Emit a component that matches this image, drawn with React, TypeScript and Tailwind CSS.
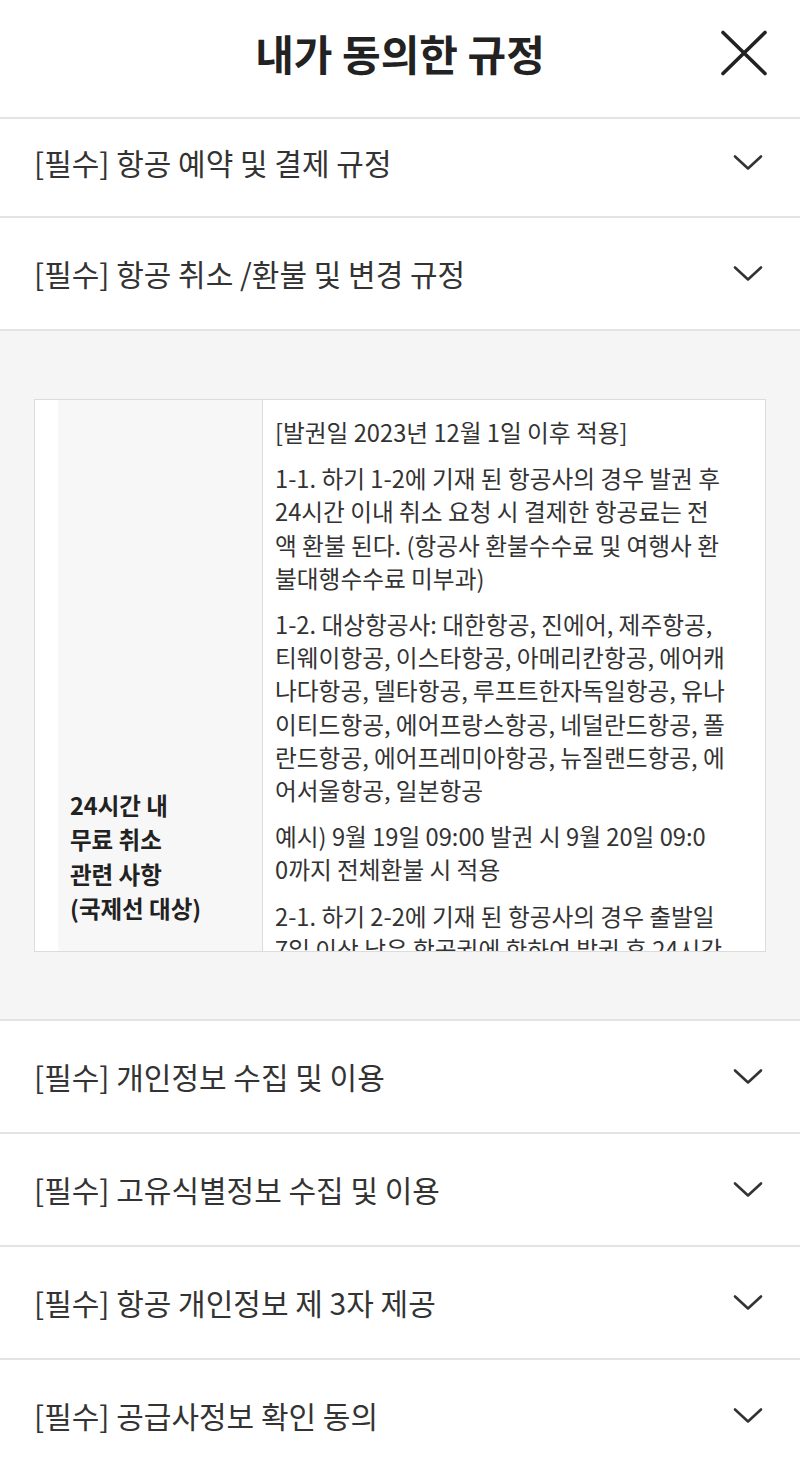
import React from "react";

const Chevron = () => (
  <svg width="30" height="17" viewBox="0 0 30 17" fill="none" className="shrink-0">
    <path d="M2 2.5 L15 14.5 L28 2.5" stroke="#333" strokeWidth="2.6" strokeLinecap="round" strokeLinejoin="round" />
  </svg>
);

const CloseIcon = () => (
  <svg width="48" height="46" viewBox="0 0 48 46" fill="none">
    <path d="M3 2.5 L45 43.5 M45 2.5 L3 43.5" stroke="#222" strokeWidth="3.6" strokeLinecap="round" />
  </svg>
);

const Row = ({ label, first }: { label: string; first?: boolean }) => (
  <div
    className={
      first
        ? "flex h-[99px] items-center justify-between border-b-2 border-[#e3e3e3] pl-[34px] pr-[37px] pb-[11px]"
        : "flex h-[113px] items-center justify-between border-b-2 border-[#e3e3e3] pl-[34px] pr-[37px]"
    }
  >
    <span className="text-[30px] text-[#333]">{label}</span>
    <Chevron />
  </div>
);

const paragraphs: string[][] = [
  ["[발권일 2023년 12월 1일 이후 적용]"],
  [
    "1-1. 하기 1-2에 기재 된 항공사의 경우 발권 후",
    "24시간 이내 취소 요청 시 결제한 항공료는 전",
    "액 환불 된다. (항공사 환불수수료 및 여행사 환",
    "불대행수수료 미부과)",
  ],
  [
    "1-2. 대상항공사: 대한항공, 진에어, 제주항공,",
    "티웨이항공, 이스타항공, 아메리칸항공, 에어캐",
    "나다항공, 델타항공, 루프트한자독일항공, 유나",
    "이티드항공, 에어프랑스항공, 네덜란드항공, 폴",
    "란드항공, 에어프레미아항공, 뉴질랜드항공, 에",
    "어서울항공, 일본항공",
  ],
  ["예시) 9월 19일 09:00 발권 시 9월 20일 09:0", "0까지 전체환불 시 적용"],
  [
    "2-1. 하기 2-2에 기재 된 항공사의 경우 출발일",
    "7일 이상 남은 항공권에 한하여 발권 후 24시간",
    "이내 취소 요청 시 결제한 항공료는 전액 환불",
    "된다. (항공사 환불수수료 및 여행사 환불대행",
    "수수료 미부과)",
  ],
  [
    "2-2. 대상항공사: 아시아나항공, 에어부산, 싱가",
    "포르항공, 캐세이퍼시픽항공, 베트남항공, 타이",
    "항공, 필리핀항공, 중화항공, 에바항공",
  ],
  ["예시) 9월 10일 출발 항공권을 9월 1일 09:00", "발권 시 9월 2일 09:00까지 전체환불 시", "적용"],
];

export default function App() {
  return (
    <div className="min-h-[1460px] bg-white font-['Noto_Sans_CJK_KR','Noto_Sans',sans-serif] text-[#222]">
      <header className="grid h-[119px] grid-cols-[1fr_auto_1fr] items-center border-b-2 border-[#e3e3e3] pb-[12px]">
        <div />
        <h1 className="text-[42px] font-bold text-[#222]">내가 동의한 규정</h1>
        <div className="flex justify-end pr-[32px]">
          <CloseIcon />
        </div>
      </header>

      <Row label="[필수] 항공 예약 및 결제 규정" first />
      <Row label="[필수] 항공 취소 /환불 및 변경 규정" />

      <div className="border-b-2 border-[#e3e3e3] bg-[#f5f5f5] px-[34px] pt-[68px] pb-[67px]">
        <div className="h-[553px] overflow-hidden border border-[#dcdcdc] bg-white">
          <div className="flex">
            <div className="w-[23px] shrink-0 bg-white" />
            <div className="flex w-[205px] shrink-0 items-center border-r border-[#dcdcdc] bg-[#f7f7f7] pl-[12px]">
              <div className="text-[23.5px] font-bold leading-[34.5px] text-[#222]">
                <div>24시간 내</div>
                <div>무료 취소</div>
                <div>관련 사항</div>
                <div>(국제선 대상)</div>
              </div>
            </div>
            <div className="min-w-0 flex-1 overflow-hidden pl-[12px] pt-[16px] pb-[10px] text-[23.7px] leading-[33.2px] text-[#333]">
              {paragraphs.map((p, i) => (
                <div key={i} className="mb-[13px]">
                  {p.map((line, j) => (
                    <div key={j} className="whitespace-nowrap">
                      {line}
                    </div>
                  ))}
                </div>
              ))}
            </div>
          </div>
        </div>
      </div>

      <Row label="[필수] 개인정보 수집 및 이용" />
      <Row label="[필수] 고유식별정보 수집 및 이용" />
      <Row label="[필수] 항공 개인정보 제 3자 제공" />
      <Row label="[필수] 공급사정보 확인 동의" />
    </div>
  );
}
